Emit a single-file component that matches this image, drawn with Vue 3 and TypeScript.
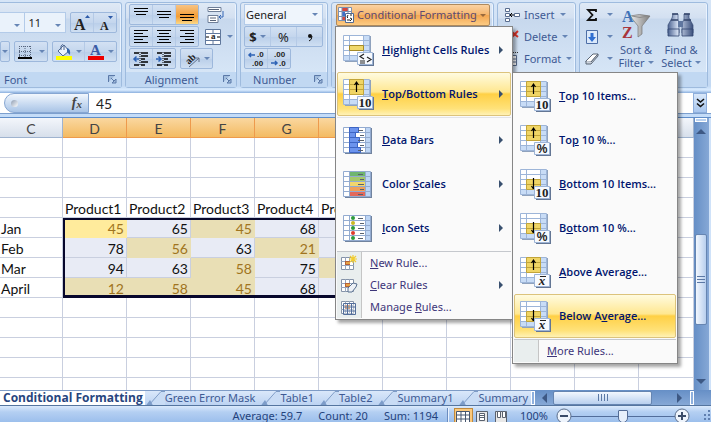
<script setup lang="ts">
import { ref } from 'vue'

interface MenuItem {
  pre: string
  key: string
  post: string
  icon: string
  badge?: string
  active?: boolean
  arrow?: boolean
}

interface Cell {
  text: string
  kind?: 'current' | 'marked' | 'plain'
}

const columns = [
  { name: 'C', on: false },
  { name: 'D', on: true },
  { name: 'E', on: true },
  { name: 'F', on: true },
  { name: 'G', on: true },
  { name: '', on: true },
  { name: '', on: false },
  { name: '', on: false },
  { name: '', on: false },
  { name: '', on: false },
  { name: '', on: false },
]

const months = [
  { name: 'Jan', values: ['45', '65', '45', '68', ''], marked: [0, 2] },
  { name: 'Feb', values: ['78', '56', '63', '21', ''], marked: [1, 3] },
  { name: 'Mar', values: ['94', '63', '58', '75', ''], marked: [2, 4] },
  { name: 'April', values: ['12', '58', '45', '68', ''], marked: [0, 1, 2] },
]

function blankRow(): Cell[] {
  return columns.map(() => ({ text: '' }))
}

function dataRow(index: number): Cell[] {
  const month = months[index]
  const cells = blankRow()
  cells[0].text = month.name
  month.values.forEach((value, i) => {
    const current = index === 0 && i === 0
    cells[i + 1] = { text: value, kind: current ? 'current' : month.marked.includes(i) ? 'marked' : 'plain' }
  })
  return cells
}

const titles = blankRow()
for (let i = 1; i <= 5; i++) titles[i].text = 'Product' + i

const rows: Cell[][] = [
  blankRow(), blankRow(), blankRow(), titles,
  dataRow(0), dataRow(1), dataRow(2), dataRow(3),
  blankRow(), blankRow(), blankRow(), blankRow(), blankRow(),
]

const ruleItems: MenuItem[] = [
  { pre: '', key: 'H', post: 'ighlight Cells Rules', icon: 'mid', badge: '≤>', arrow: true },
  { pre: '', key: 'T', post: 'op/Bottom Rules', icon: 'top', badge: '10', arrow: true, active: true },
]
const styleItems: MenuItem[] = [
  { pre: '', key: 'D', post: 'ata Bars', icon: 'bars', arrow: true },
  { pre: 'Color ', key: 'S', post: 'cales', icon: 'scales', arrow: true },
  { pre: '', key: 'I', post: 'con Sets', icon: 'sets', arrow: true },
]
const smallItems: MenuItem[] = [
  { pre: '', key: 'N', post: 'ew Rule...', icon: 'new' },
  { pre: '', key: 'C', post: 'lear Rules', icon: 'clear', arrow: true },
  { pre: 'Manage ', key: 'R', post: 'ules...', icon: 'manage' },
]
const topItems: MenuItem[] = [
  { pre: '', key: 'T', post: 'op 10 Items...', icon: 'top', badge: '10' },
  { pre: 'To', key: 'p', post: ' 10 %...', icon: 'top', badge: '%' },
  { pre: '', key: 'B', post: 'ottom 10 Items...', icon: 'bottom', badge: '10' },
  { pre: 'B', key: 'o', post: 'ttom 10 %...', icon: 'bottom', badge: '%' },
  { pre: '', key: 'A', post: 'bove Average...', icon: 'top', badge: 'x' },
  { pre: 'Below A', key: 'v', post: 'erage...', icon: 'bottom', badge: 'x', active: true },
]
const menus = [
  { id: 'rules', label: 'Conditional Formatting', groups: [ruleItems, styleItems], small: smallItems },
  {
    id: 'top',
    label: 'Top/Bottom Rules',
    groups: [topItems],
    small: [{ pre: '', key: 'M', post: 'ore Rules...', icon: 'none' } as MenuItem],
  },
]

const tabs = ['Green Error Mask', 'Table1', 'Table2', 'Summary1', 'Summary']
const barWidths = [9, 6, 10, 8, 11]
const scaleColors = ['#6fb56f', '#a5c86a', '#f2d66c', '#efa05a', '#e2695c']
const dotColors = ['#2c9a3c', '#c9b822', '#2c9a3c', '#e03a2c', '#2c9a3c']

const alignTop = [
  { label: 'Top Align', y: 3, on: false },
  { label: 'Middle Align', y: 6, on: false },
  { label: 'Bottom Align', y: 9, on: true },
]
const alignSide = [
  { label: 'Align Left', side: 'l' },
  { label: 'Center', side: 'c' },
  { label: 'Align Right', side: 'r' },
]
function lineX(side: string, i: number): number {
  if (i % 2 === 0) return 3
  return side === 'l' ? 3 : side === 'c' ? 5 : 8
}
function lineW(side: string, i: number): number {
  if (i % 2 === 0) return 14
  return side === 'c' ? 10 : 9
}

const fontName = ref('')
const fontSize = ref('11')
const formula = ref('45')
const zoom = ref(50)
</script>

<template>
  <div class="app">
    <header class="ribbon">
      <section class="group g-font">
        <div class="body rows-wide">
          <div class="row">
            <div class="combo name">
              <input v-model="fontName" aria-label="Font name" />
              <button aria-label="Font list"><i class="tri"></i></button>
            </div>
            <div class="combo size">
              <input v-model="fontSize" aria-label="Font size" />
              <button aria-label="Size list"><i class="tri"></i></button>
            </div>
            <div class="set push">
              <button class="tool" aria-label="Grow font">
                <svg width="18" height="18"><text x="1" y="16" class="serif" font-size="16">A</text><path d="M12 4l2.500-3 2.500 3z" fill="#2d5aa8" /></svg>
              </button>
              <button class="tool" aria-label="Shrink font">
                <svg width="18" height="18"><text x="4" y="16" class="serif" font-size="12">A</text><path d="M12 2l2.500 3 2.500-3z" fill="#2d5aa8" /></svg>
              </button>
            </div>
          </div>
          <div class="row">
            <div class="set"><button class="tool tiny" aria-label="Underline styles"><i class="tri"></i></button></div>
            <div class="set push">
              <button class="tool border-tool" aria-label="Borders">
                <svg width="16" height="16"><path d="M2 2.500h12M2 7.500h12M2 11.500h12M2.500 2v11M8 2v11M13.500 2v11" stroke="#56657e" stroke-dasharray="1 1" fill="none" /><path d="M1 14h14" stroke="#000" stroke-width="2" /></svg>
                <i class="tri"></i>
              </button>
            </div>
            <div class="set push">
              <button class="tool" aria-label="Fill color">
                <svg width="18" height="18"><path d="M3 8l6-6 5 6-6 5z" fill="#edf3fb" stroke="#4d6791" /><path d="M6 7V3q2-3 3 0v4" fill="none" stroke="#4d6791" /><path d="M12 5q4 1 3 7l-3-3z" fill="#3566aa" /><path d="M1 13h16v4H1z" fill="#ff0" /></svg>
                <i class="tri"></i>
              </button>
              <button class="tool" aria-label="Font color">
                <svg width="18" height="18"><text x="3" y="12" class="serif blue" font-size="15">A</text><path d="M1 13h16v4H1z" fill="#e00" /></svg>
                <i class="tri"></i>
              </button>
            </div>
          </div>
        </div>
        <footer>Font<button class="launch" aria-label="Font settings"><svg width="9" height="9"><path d="M.5 7V.5H7M3 3l3 3M8 4v4H4z" stroke="#5b79a8" fill="#5b79a8" fill-opacity=".3" /></svg></button></footer>
      </section>

      <section class="group g-align">
        <div class="body rows-tight">
          <div class="row">
            <div class="set">
              <button v-for="a in alignTop" :key="a.label" class="tool sq" :class="{ on: a.on }" :aria-label="a.label">
                <svg width="20" height="20"><path v-for="i in 3" :key="i" :d="`M${i === 3 ? 5 : 3} ${a.y + (i - 1) * 3 + 0.5}h${i === 3 ? 10 : 14}`" stroke="#000" /></svg>
              </button>
            </div>
            <button class="tool bare" aria-label="Wrap text">
              <svg width="18" height="18"><path d="M2 1.500h13v4H2zM2 9.500h10v7H2z" fill="#fff" stroke="#6f7f98" /><path d="M3 3.500h10M4 12h6M4 14.500h6" stroke="#59657a" /><path d="M17 5v6h-3M15 9l-2 2 2 2" fill="none" stroke="#3567b5" /></svg>
            </button>
          </div>
          <div class="row">
            <div class="set">
              <button v-for="a in alignSide" :key="a.label" class="tool sq" :aria-label="a.label">
                <svg width="20" height="20"><path v-for="i in 5" :key="i" :d="`M${lineX(a.side, i - 1)} ${i * 3 + 0.5}h${lineW(a.side, i - 1)}`" stroke="#000" /></svg>
              </button>
            </div>
            <button class="tool bare" aria-label="Merge and center">
              <svg width="18" height="18"><path d="M1.500 1.500h15v15h-15zM1.500 5.500h15M1.500 12.500h15M9 1.500v4M9 12.500v4" fill="#fff" stroke="#60789c" /><text x="7" y="11" class="serif" font-size="9">a</text><path d="M2 9h3M13 9h3" stroke="#000" /></svg>
              <i class="tri"></i>
            </button>
          </div>
          <div class="row">
            <div class="set">
              <button class="tool sq" aria-label="Decrease indent">
                <svg width="20" height="20"><path d="M3 4h5M10 4h7M10 7h7M10 10h4M10 13h7M3 16h5M10 16h4" stroke="#000" stroke-width="1.300" /><path d="M9 3v14" stroke="#000" stroke-dasharray="1 1" /><path d="M8 10H3M5.500 7.500L3 10l2.500 2.500" stroke="#2d62b5" stroke-width="1.500" fill="none" /></svg>
              </button>
              <button class="tool sq" aria-label="Increase indent">
                <svg width="20" height="20"><path d="M3 4h5M10 4h7M10 7h7M10 10h4M10 13h7M3 16h5M10 16h4" stroke="#000" stroke-width="1.300" /><path d="M9 3v14" stroke="#000" stroke-dasharray="1 1" /><path d="M2 10h5M4.500 7.500L7 10l-2.500 2.500" stroke="#2d62b5" stroke-width="1.500" fill="none" /></svg>
              </button>
            </div>
            <div class="set push">
              <button class="tool" aria-label="Orientation">
                <svg width="18" height="18"><text x="3" y="12" class="serif" font-size="10" transform="rotate(-45 8 10)">ab</text><path d="M6 17L16 8M16 12V8h-4" stroke="#60708a" fill="none" /></svg>
                <i class="tri"></i>
              </button>
            </div>
          </div>
        </div>
        <footer class="mid">Alignment<button class="launch" aria-label="Alignment settings"><svg width="9" height="9"><path d="M.5 7V.5H7M3 3l3 3M8 4v4H4z" stroke="#5b79a8" fill="#5b79a8" fill-opacity=".3" /></svg></button></footer>
      </section>

      <section class="group g-number">
        <div class="body rows-tight">
          <div class="select-box">
            <select aria-label="Number format"><option>General</option></select>
            <i class="tri"></i>
          </div>
          <div class="row">
            <div class="set fill">
              <button class="tool money" aria-label="Currency"><b>$</b><i class="tri"></i></button>
              <button class="tool money" aria-label="Percent">%</button>
              <button class="tool money" aria-label="Comma"><svg width="8" height="12"><circle cx="4" cy="5" r="2" fill="#111" /><path d="M6 5q0 4-3 5" stroke="#111" fill="none" /></svg></button>
            </div>
          </div>
          <div class="row">
            <div class="set">
              <button class="tool sq" aria-label="Increase decimal">
                <svg width="20" height="20"><text x="11" y="8" class="dec">.0</text><text x="6" y="17" class="dec">.00</text><path d="M3 6h6M5 4L3 6l2 2" stroke="#2d62b5" fill="none" stroke-width="1.500" /></svg>
              </button>
              <button class="tool sq" aria-label="Decrease decimal">
                <svg width="20" height="20"><text x="5" y="8" class="dec">.00</text><text x="10" y="17" class="dec">.0</text><path d="M2 14h6M6 12l2 2-2 2" stroke="#2d62b5" fill="none" stroke-width="1.500" /></svg>
              </button>
            </div>
          </div>
        </div>
        <footer class="mid">Number<button class="launch" aria-label="Number settings"><svg width="9" height="9"><path d="M.5 7V.5H7M3 3l3 3M8 4v4H4z" stroke="#5b79a8" fill="#5b79a8" fill-opacity=".3" /></svg></button></footer>
      </section>

      <section class="group g-styles">
        <div class="body">
          <button class="cf" aria-haspopup="true" aria-expanded="true">
            <svg width="16" height="16"><path d="M.5.5h13v13H.5z" fill="#fff" stroke="#7b8fb0" /><path d="M4 1h6v3H4z" fill="#d8453c" /><path d="M4 5h3v4H4z" fill="#3e6fc9" /><path d="M4 10h4v3H4z" fill="#d8453c" /><path d="M.5 4.500h13M.5 9.500h13M4 1v13M10 1v13" stroke="#7b8fb0" /><path d="M7.500 6.500h8v9h-8z" fill="#fff" stroke="#516a94" /><path d="M10 8l-1 2 1 1M12 8h2M9 13h3M12 11l2 1-2 2" stroke="#222" fill="none" /></svg>
            <span>Conditional Formatting</span>
            <i class="tri warm"></i>
          </button>
        </div>
        <footer></footer>
      </section>

      <section class="group g-cells">
        <div class="body rows-tight">
          <button class="line">
            <svg width="16" height="16"><path d="M1.500 1.500h4v3h-4zM1.500 6.500h4v3h-4zM1.500 11.500h4v3h-4zM10.500 6.500h5v3h-5z" fill="#fff" stroke="#596d8e" /><path d="M10 8H6M8 6L6 8l2 2" stroke="#000" fill="none" /></svg>
            <span>Insert</span><i class="tri"></i>
          </button>
          <button class="line">
            <svg width="16" height="16"><path d="M1.500 1.500h4v3h-4zM1.500 6.500h4v3h-4zM1.500 11.500h4v3h-4z" fill="#fff" stroke="#596d8e" /><path d="M8 3l6 5M14 2L8 8" stroke="#e0352b" stroke-width="2" /></svg>
            <span>Delete</span><i class="tri"></i>
          </button>
          <button class="line">
            <svg width="16" height="16"><path d="M3.500 4.500h9v10h-9zM3.500 8h9M3.500 11h9M8 4v10" fill="#fff" stroke="#596d8e" /><path d="M3 1.500h11" stroke="#333" stroke-dasharray="1 1" /></svg>
            <span>Format</span><i class="tri"></i>
          </button>
        </div>
        <footer></footer>
      </section>

      <section class="group g-edit">
        <div class="body edit">
          <div class="rows-tight">
            <button class="line icon" aria-label="AutoSum"><svg width="16" height="16"><path d="M12 5V3H4l4.500 5L4 13h8v-2" stroke="#111" stroke-width="1.800" fill="none" /></svg><i class="tri"></i></button>
            <button class="line icon" aria-label="Fill"><svg width="16" height="16"><path d="M2.500 1.500h11v13h-11z" fill="#dbe9fb" stroke="#4d6ea6" /><path d="M6.500 4h3v4H12l-4 5-4-5h2.500z" fill="#2f6fd2" /></svg><i class="tri"></i></button>
            <button class="line icon" aria-label="Clear"><svg width="16" height="16"><path d="M2 10l7-7h5l-7 8H2z" fill="#fff" stroke="#5b6675" /><path d="M2 10v3h5l7-8V3l-7 8" fill="#cdd4de" stroke="#5b6675" /></svg><i class="tri"></i></button>
          </div>
          <button class="big">
            <svg width="32" height="32">
              <defs><linearGradient id="funnel"><stop offset="0" stop-color="#eee" /><stop offset="1" stop-color="#7d7d7d" /></linearGradient></defs>
              <path d="M10 8q9-3 20 0l-8 10v8l-4 3V18z" fill="url(#funnel)" stroke="#777" stroke-width=".7" /><path d="M12 8q8 3 16 0" stroke="#8c8c8c" fill="none" />
              <text x="2" y="14" class="serif azure" font-size="16">A</text>
              <text x="2" y="30" class="serif red" font-size="16">Z</text>
            </svg>
            <span>Sort &amp;</span><span>Filter<i class="tri"></i></span>
          </button>
          <button class="big">
            <svg width="32" height="32">
              <defs><linearGradient id="glass"><stop offset="0" stop-color="#4c6391" /><stop offset=".4" stop-color="#d5e0f3" /><stop offset="1" stop-color="#3a4f7c" /></linearGradient></defs>
              <path d="M8 6h5v5l1 5v9H3v-8l4-7zM19 6h5v4l4 7v8H17v-9l2-5z" fill="url(#glass)" stroke="#3b4f78" stroke-width=".7" />
              <path d="M3 21h11v7H3zM17 21h11v7H17z" fill="url(#glass)" stroke="#31456f" stroke-width=".8" />
              <path d="M13 13h5v6h-5z" fill="#5f769f" /><path d="M7 6h6M19 6h6M6 12h7M19 12h7" stroke="#34466b" stroke-width="1.500" />
            </svg>
            <span>Find &amp;</span><span>Select<i class="tri"></i></span>
          </button>
        </div>
        <footer></footer>
      </section>
    </header>

    <div class="formula">
      <div class="pill"><span class="knob"></span><button aria-label="Insert function"><span class="f">f</span><span class="x">x</span></button></div>
      <input v-model="formula" aria-label="Formula" />
      <button class="expand" aria-label="Expand formula bar"><svg width="11" height="12"><path d="M2 2l3.500 3L9 2M2 6.500l3.500 3L9 6.500" stroke="#111" stroke-width="1.600" fill="none" /></svg></button>
    </div>

    <main class="sheet">
      <div class="grid">
        <table>
          <thead>
            <tr><th v-for="(c, i) in columns" :key="i" :class="{ on: c.on }">{{ c.name }}</th></tr>
          </thead>
          <tbody>
            <tr v-for="(r, ri) in rows" :key="ri" :class="{ first: ri === 4, last: ri === 7 }">
              <td v-for="(cell, ci) in r" :key="ci" :class="[cell.kind, { sel: cell.kind, start: cell.kind && ci === 1 }]">{{ cell.text }}</td>
            </tr>
          </tbody>
        </table>
      </div>
      <div class="vscroll">
        <span class="split"></span>
        <button aria-label="Scroll up"><i class="tri up"></i></button>
        <div class="track"><div class="thumb"><i></i><i></i><i></i></div></div>
        <button aria-label="Scroll down"><i class="tri dark"></i></button>
      </div>
    </main>

    <nav class="tabs">
      <div class="names">
        <a href="#current" class="current">Conditional Formatting</a>
        <template v-for="t in tabs" :key="t">
          <svg width="20" height="15"><path d="M0 14.500h5L17 .5h3V15H0z" fill="#c9dcf5" /><path d="M1 14.500L5 9l3 5.500z" fill="#7c9cc9" /><path d="M4 14L16 .5h4" stroke="#7f9cc6" fill="none" /></svg>
          <a href="#sheet">{{ t }}</a>
        </template>
      </div>
      <div class="hscroll">
        <span class="split"></span>
        <button aria-label="Scroll left"><i class="tri left"></i></button>
        <div class="thumb"><i></i><i></i><i></i><i></i></div>
        <button class="far" aria-label="Scroll right"><i class="tri right"></i></button>
        <span class="split"></span>
      </div>
    </nav>

    <footer class="status">
      <span>Average: 59.7</span><span>Count: 20</span><span>Sum: 1194</span>
      <div class="views">
        <button class="on" aria-label="Normal"><svg width="14" height="14"><path d="M.5 1.500h13v11H.5zM.5 5h13M.5 9h13M5 1v12M9.500 1v12" fill="#fff" stroke="#46566f" /></svg></button>
        <button aria-label="Page layout"><svg width="14" height="14"><path d="M1.500 1.500h11v11h-11z" fill="#e8e8e8" stroke="#59616e" /><path d="M4.500 3.500h5v7h-5zM5 5.500h4M5 7.500h4" fill="#fff" stroke="#59616e" /></svg></button>
        <button aria-label="Page breaks"><svg width="14" height="14"><path d="M1.500 1.500h11v11h-11z" fill="#e8e8e8" stroke="#59616e" /><path d="M3.500 1.500h3v6h-3zM8.500 1.500h3v6h-3z" fill="#fff" stroke="#59616e" /></svg></button>
      </div>
      <button class="percent">100%</button>
      <button class="round" aria-label="Zoom out"><svg width="16" height="16"><circle cx="8" cy="8" r="7" fill="#eef4fc" stroke="#5c6f8d" /><path d="M4 8h8" stroke="#3b4c69" stroke-width="2" /></svg></button>
      <input v-model="zoom" type="range" min="0" max="100" aria-label="Zoom" />
      <button class="round" aria-label="Zoom in"><svg width="16" height="16"><circle cx="8" cy="8" r="7" fill="#eef4fc" stroke="#5c6f8d" /><path d="M4 8h8M8 4v8" stroke="#3b4c69" stroke-width="2" /></svg></button>
      <svg class="grip" width="9" height="12"><path d="M6 1h2v2H6zM6 5h2v2H6zM2 5h2v2H2zM6 9h2v2H6zM2 9h2v2H2z" fill="#5f7fb0" /></svg>
    </footer>

    <div v-for="m in menus" :key="m.id" class="menu" :class="m.id" role="menu" :aria-label="m.label">
      <div v-for="(g, gi) in m.groups" :key="gi" class="block">
        <button v-for="it in g" :key="it.post" class="item" :class="{ active: it.active }" role="menuitem">
          <svg width="32" height="32">
            <template v-if="it.badge">
              <path d="M2 2h26v26H2z" fill="#8fa2bd" />
              <path d="M.5 1.500h26v25H.5z" fill="#fff" />
              <path d="M20 2h6v24h-6zM1 22h25v4H1z" fill="#c8dcf6" />
              <path v-if="it.icon === 'mid'" d="M7 11h13v6H7z" fill="#f0d86c" />
              <path v-if="it.icon === 'top'" d="M7 1h13v16H7z" fill="#f0d565" />
              <path v-if="it.icon === 'bottom'" d="M7 12h13v10H7z" fill="#f0d565" />
              <path d="M.5 1.500h26v25H.5zM.5 6.500h26M.5 11.500h26M.5 16.500h26M.5 21.500h26M6.500 1v25M20.500 1v25" fill="none" stroke="#9db5d8" />
              <path v-if="it.icon === 'mid'" d="M6.500 11.500h14v5h-14z" fill="none" stroke="#a58b28" />
              <path v-if="it.icon === 'top'" d="M6.500 1.500h14v15h-14zM6.500 6.500h14M6.500 11.500h14" fill="none" stroke="#c2a53a" />
              <path v-if="it.icon === 'bottom'" d="M6.500 11.500h14v10h-14zM6.500 16.500h14" fill="none" stroke="#c2a53a" />
              <path v-if="it.icon === 'top'" d="M13.500 14V4M11.500 7l2-3 2 3" fill="none" stroke="#000" stroke-width="1.200" />
              <path v-if="it.icon === 'bottom'" d="M13.500 10v11M11.500 18l2 3" fill="none" stroke="#000" stroke-width="1.200" />
              <path d="M16 19h15v13H16z" fill="#637694" />
              <path d="M14.500 18.500h15v12h-15z" fill="#f7fafe" stroke="#9db4d6" />
              <path v-if="it.badge === '≤>'" d="M21 20l-4 2.500 4 2.500M17 27h5M17 29h5M24 23l4 2.500-4 2.500" fill="none" stroke="#222" stroke-width="1.200" />
              <text v-if="it.badge === '10'" x="22" y="29" text-anchor="middle" class="serif" font-size="13">10</text>
              <text v-if="it.badge === '%'" x="22" y="29" text-anchor="middle" class="pct">%</text>
              <text v-if="it.badge === 'x'" x="22" y="29" text-anchor="middle" class="mean">x</text>
              <path v-if="it.badge === 'x'" d="M20 20.500h6" stroke="#222" />
            </template>
            <template v-else>
              <path d="M2 4h27v26H2z" fill="#71839e" />
              <path d="M.5 3.500h27v25H.5z" fill="#fff" />
              <path d="M22 4h6v24h-6z" fill="#bdd5f5" />
              <template v-if="it.icon === 'scales'"><path v-for="(c, i) in scaleColors" :key="i" :d="`M6 ${4 + i * 5}h16v5H6z`" :fill="c" /></template>
              <path d="M.5 3.500h27v25H.5zM.5 8.500h27M.5 13.500h27M.5 18.500h27M.5 23.500h27M6.500 3v25M22.500 3v25" fill="none" stroke="#93abd0" />
              <template v-if="it.icon === 'bars'"><path v-for="(w, i) in barWidths" :key="i" :d="`M6.500 ${3.5 + i * 5}h${w}v5h-${w}z`" fill="#6c94ee" stroke="#3d65c4" /></template>
              <template v-if="it.icon === 'sets'"><circle v-for="(c, i) in dotColors" :key="i" cx="10" :cy="6 + i * 5" r="2" :fill="c" /></template>
              <path d="M15 6.500h5M17 11.500h4M15 16.500h6M17 21.500h4M15 26.500h5" stroke="#59616b" />
            </template>
          </svg>
          <span class="label">{{ it.pre }}<u>{{ it.key }}</u>{{ it.post }}</span>
          <i v-if="it.arrow" class="tri go"></i>
        </button>
      </div>
      <div class="block small">
        <button v-for="it in m.small" :key="it.post" class="item" role="menuitem">
          <svg width="18" height="16">
            <template v-if="it.icon !== 'none'">
              <path d="M1.500 2.500h12v12h-12z" fill="#fff" stroke="#8593a8" />
              <path d="M1 6.500h13M1 10.500h13M5.500 2v13M9.500 2v13" stroke="#96a5bb" />
              <path d="M5 6h5v4H5z" fill="#b5623a" /><path d="M6 7h4v2H6z" fill="#e7a344" />
              <path v-if="it.icon === 'new'" d="M13 0v8M9 4h8M10 1l6 6M16 1l-6 6" stroke="#f2cd30" stroke-width="1.200" />
              <path v-if="it.icon === 'clear'" d="M8 11l5-5 4 1-1 3-4 5H8z" fill="#edf1f6" stroke="#59708f" />
              <path v-if="it.icon === 'manage'" d="M3.500 4.500h12v11h-12zM7.500 4v11M11.500 4v11M3 8h13M3 12h13" fill="#fff" fill-opacity=".4" stroke="#536e9b" />
            </template>
          </svg>
          <span class="label">{{ it.pre }}<u>{{ it.key }}</u>{{ it.post }}</span>
          <i v-if="it.arrow" class="tri go"></i>
        </button>
      </div>
    </div>
  </div>
</template>

<style>
body {
  margin: 0;
  background: #bfdbff;
}
</style>

<style scoped>
.app {
  --ink: #3e5a94;
  --edge: #9ebbde;
  --line: #c9cfdf;
  --mark: #07072c;
  position: relative;
  display: flex;
  flex-direction: column;
  height: 100vh;
  overflow: hidden;
  background: #c4dcf8;
  color: var(--ink);
  font-family: "Noto Sans", "Open Sans", sans-serif;
  font-size: 11px;
  line-height: 14px;
}
.app * { box-sizing: border-box; }
button, input, select {
  font: inherit;
  color: inherit;
  border: 0;
  padding: 0;
  margin: 0;
  background: none;
  border-radius: 0;
}
svg { display: block; flex: none; }
a { color: inherit; text-decoration: none; }

.tri {
  display: inline-block;
  flex: none;
  width: 0;
  height: 0;
  border: 3px solid transparent;
  border-top-color: #6685b5;
  border-bottom-width: 0;
}
.tri.warm { border-top-color: #9a6a3c; }
.tri.dark { border-width: 5px 5px 0; border-top-color: #3d5884; }
.tri.up { border-width: 0 5px 5px; border-color: transparent transparent #3d5884; }
.tri.left { border-width: 5px 5px 5px 0; border-color: transparent #3d5884 transparent transparent; }
.tri.right { border-width: 5px 0 5px 5px; border-color: transparent transparent transparent #3d5884; }
.tri.go { border-width: 4px 0 4px 4px; border-color: transparent transparent transparent #39506f; }

.ribbon {
  display: flex;
  flex: none;
  gap: 3px;
  height: 93px;
  padding: 2px 3px 5px 0;
  background: linear-gradient(#d6e5f7, #c3d9f3 86px, #d9ebff 90px, #8cb0de);
}
.group {
  display: flex;
  flex-direction: column;
  flex: none;
  border: 1px solid var(--edge);
  border-radius: 3px;
  background: linear-gradient(#dfe9f5, #d3e0f1 15px, #c7d8ed 16px, #dae9f9);
  box-shadow: inset -1px 0 #e9f3ff;
}
.group footer {
  display: flex;
  align-items: center;
  height: 15px;
  padding: 0 4px;
  background: #c1d8f2;
}
.group footer.mid::before { content: ""; margin-right: auto; }
.launch { margin-left: auto; padding-left: 10px; }
.body { flex: 1; padding: 1px 4px 0; }
.rows-tight { display: flex; flex-direction: column; gap: 1px; }
.rows-wide { display: flex; flex-direction: column; gap: 8px; padding-top: 9px; }
.row { display: flex; align-items: center; }
.g-font { width: 122px; border-left: 0; border-radius: 0 3px 3px 0; }
.g-font .body { padding-left: 0; }
.g-align { width: 112px; }
.g-number { width: 88px; }
.g-styles { flex: 1 1 0; min-width: 0; }
.g-cells { width: 79px; }
.g-edit { width: 129px; }
.g-align .body, .g-number .body { padding-left: 3px; }

.set {
  display: flex;
  height: 21px;
  border: 1px solid #9db8dc;
  border-radius: 2px;
  background: linear-gradient(#d3e1f3, #c4d6ed 50%, #b9cee9 51%, #cfdff2);
}
.set.push { margin-left: 4px; }
.set.fill { width: 100%; }
.tool {
  display: flex;
  align-items: center;
  justify-content: center;
  gap: 3px;
  min-width: 21px;
  padding: 0 2px;
}
.tool + .tool { border-left: 1px solid #b5cae6; }
.tool.sq { width: 22px; padding: 0; }
.tool.sq + .tool.sq { width: 23px; }
.tool.tiny { min-width: 8px; padding: 0 1px; }
.tool.border-tool { gap: 6px; }
.tool.on { background: linear-gradient(#f7c384, #f49d34 60%, #fbd98a); }
.tool.bare { margin-left: 5px; padding: 0; gap: 5px; }
.tool.money { flex: 1; font-size: 13px; color: #222; }
.serif { font-family: "Liberation Serif", serif; font-weight: bold; fill: #222; }
.serif.blue { fill: #3a5ba5; }
.serif.azure { fill: #3f73b8; }
.serif.red { fill: #a8353d; }
.dec { font: bold 8px/8px "Liberation Sans", sans-serif; fill: #222; }
.pct { font: bold 12px "Liberation Sans", sans-serif; fill: #222; }
.mean { font: italic bold 13px "Liberation Serif", serif; fill: #222; }

.combo {
  display: flex;
  height: 21px;
  border: 1px solid #b3cbe9;
  border-left: 0;
  background: #eaf2fb;
  color: #222;
}
.combo input { width: 100%; min-width: 0; padding-left: 3px; }
.combo.name { width: 27px; }
.combo.size { width: 43px; }
.combo button { flex: none; width: 14px; }
.select-box { display: flex; align-items: center; height: 21px; padding-right: 4px; border: 1px solid #b3cbe9; background: #eff5fc; color: #222; }
.select-box select { flex: 1; min-width: 0; height: 19px; padding-left: 1px; appearance: none; outline: 0; }

.g-styles .body { padding: 1px 3px 0 4px; }
.cf {
  display: flex;
  align-items: center;
  gap: 3px;
  width: 100%;
  height: 22px;
  padding: 0 3px 0 1px;
  border: 1px solid #b08a5c;
  border-radius: 2px;
  background: linear-gradient(#fbd2a2, #f5b56c 50%, #f4a650 51%, #fccb83);
  color: #5e4a70;
  white-space: nowrap;
}
.cf .tri { margin-left: auto; }
.line { display: flex; align-items: center; gap: 4px; height: 21px; }
.line .tri { margin-left: 1px; }
.line.icon { gap: 6px; }
.g-cells .body { padding-left: 6px; }
.edit { display: flex; gap: 1px; }
.big { display: flex; flex-direction: column; align-items: center; flex: 1; padding-top: 4px; line-height: 13px; white-space: nowrap; }
.big span { display: flex; align-items: center; gap: 3px; }
.big svg { margin-bottom: 3px; }

.formula { display: flex; flex: none; height: 21px; padding-right: 4px; border-bottom: 1px solid #7c9fce; background: #fff; }
.pill {
  display: flex;
  align-items: center;
  justify-content: space-between;
  width: 85px;
  margin-left: 4px;
  padding: 0 6px;
  border: 1px solid #86a6d2;
  border-radius: 10px 0 0 10px;
  background: linear-gradient(#f2f7fd, #c5d8f0 60%, #a9c4e6);
}
.knob { width: 7px; height: 7px; border-radius: 50%; background: linear-gradient(135deg, #8e9db3, #fff); }
.pill button { display: flex; color: #444; font: italic bold 14px "Liberation Serif", serif; }
.pill .x { font-size: 11px; padding-top: 3px; }
.formula input { flex: 1; min-width: 0; padding-left: 7px; color: #222; font: 14px Lato, sans-serif; }
.expand { display: flex; align-items: center; justify-content: center; width: 14px; border: 1px solid #8eaedb; background: linear-gradient(#d9e8fa, #a8c6ee); }

.sheet { display: flex; flex: 1; min-height: 0; margin-top: 3px; border-top: 1px solid #5f8dc9; background: #fff; }
.grid { flex: 1; min-width: 0; overflow: hidden; }
table { width: 100%; table-layout: fixed; border-collapse: separate; border-spacing: 0; color: #111; font: 14px/19px Lato, sans-serif; }
th, td { width: 64px; height: 20px; padding: 0 3px 0 2px; white-space: nowrap; overflow: hidden; text-align: left; box-shadow: inset -1px -1px var(--line); }
th:first-child { width: 63px; }
td:first-child { padding: 0 1px; }
th:last-child { width: auto; }
th { --line: #9fb3cf; background: linear-gradient(#f3f6fb, #d5deea); color: #444; font-weight: normal; text-align: center; }
th.on { --line: #ee9a4c; background: linear-gradient(#fad7a0, #f3b95f); }
td.sel { text-align: right; }
td.plain { background: #e8ebf5; }
td.marked { --line: #e9dfb5; background: #e9dfb5; color: #a07420; }
td.current { --line: #ffeb9c; background: #ffeb9c; color: #a07420; }
td.start { box-shadow: inset 2px 0 var(--mark), inset -1px -1px var(--line); }
.first td.sel { box-shadow: inset 0 2px var(--mark), inset -1px -1px var(--line); }
.first td.start { box-shadow: inset 2px 2px var(--mark), inset -1px -1px var(--line); }
.last td.sel { box-shadow: inset 0 -3px var(--mark), inset -1px -1px var(--line); }
.last td.start { box-shadow: inset 2px -3px var(--mark); }

.vscroll { display: flex; flex-direction: column; align-items: stretch; width: 17px; padding: 0 2px 0 1px; border-right: 2px solid #cfe2f9; background: linear-gradient(90deg, #668fc6, #86a8d6); }
.vscroll button { display: flex; align-items: center; justify-content: center; height: 18px; }
.vscroll .split { height: 4px; border: 1px solid #fff; background: #b9d1f0; }
.track { display: flex; flex-direction: column; flex: 1; padding-top: 94px; }
.thumb { display: flex; align-items: center; justify-content: center; gap: 2px; border: 1px solid #6685b1; border-radius: 2px; background: linear-gradient(90deg, #f2f7fe, #b8cfee); }
.track .thumb { flex-direction: column; height: 91px; }
.track .thumb i { width: 8px; height: 1px; background: #5b78a5; }

.tabs { display: flex; flex: none; height: 16px; border-bottom: 1px solid #55759f; background: #c9dcf5; }
.names { display: flex; flex: 1 1 0; min-width: 0; overflow: hidden; border-top: 1px solid #7f9cc6; white-space: nowrap; background: linear-gradient(#dae8fa, #bcd3f2); }
.names a { padding-right: 5px; }
.names a.current { padding: 0 2px 0 3px; background: #fff; font-weight: 700; font-size: 12px; color: #27457e; font-family: "Open Sans", sans-serif; }
.hscroll { display: flex; align-items: center; flex: 0 0 180px; background: linear-gradient(#668fc6, #86a8d6); }
.hscroll .split { width: 4px; height: 14px; border: 1px solid #fff; background: #8eb0de; }
.hscroll button { display: flex; justify-content: center; width: 18px; }
.hscroll .far { margin-left: auto; }
.hscroll .split:last-child { margin: 0 17px 0 2px; }
.hscroll .thumb { width: 99px; height: 14px; background: linear-gradient(#f2f7fe, #b8cfee); }
.hscroll .thumb i { width: 1px; height: 7px; background: #5b78a5; }

.status { display: flex; align-items: flex-start; flex: none; height: 16px; padding-top: 3px; overflow: hidden; background: linear-gradient(#dbeafc, #b4cff2 6px, #9cbfec); color: #23427c; white-space: nowrap; }
.status > span { margin-right: 16px; }
.status > span:first-child { margin-left: auto; }
.views { display: flex; margin: -1px 8px 0 -7px; padding-left: 6px; border-left: 1px solid #6b8cbf; box-shadow: inset 1px 0 #eaf3ff; }
.views button { width: 19px; height: 18px; padding: 2px; }
.views .on { border: 1px solid #c08a3e; padding: 1px; background: #fbc97c; }
.percent { width: 30px; }
.round { margin: -1px 0 0 7px; }
.status input { appearance: none; width: 104px; height: 14px; margin: 0 0 0 -1px; background: linear-gradient(#526d9a, #526d9a) center / 100% 1px no-repeat; }
.status input::-webkit-slider-thumb { appearance: none; width: 10px; height: 13px; border: 1px solid #536c96; border-radius: 1px 1px 5px 5px; background: #e6effb; }
.status input + .round { margin-left: -1px; }
.grip { margin: 0 0 0 12px; }

.menu { position: absolute; padding: 1px; border: 1px solid #868686; background: #fafafa; color: #00156e; box-shadow: 3px 3px 3px rgba(0, 0, 0, .35); }
.menu.rules { left: 335px; top: 26px; width: 178px; }
.menu.top { left: 512px; top: 72px; width: 166px; }
.item { display: flex; align-items: center; gap: 7px; width: 100%; height: 44px; padding: 0 7px 0 5px; border: 1px solid transparent; border-radius: 2px; font-family: "Open Sans", sans-serif; font-weight: 600; white-space: nowrap; }
.item.active { border-color: #dcc37c; background: linear-gradient(#fffbe0, #ffe790 45%, #ffd045 50%, #ffe27a 85%, #fff2b5); }
.item .go { margin-left: auto; }
.block + .block { margin-top: 1px; border-top: 1px solid #e2e4e8; }
.block.small { border-top-color: #c5c8cd; background: linear-gradient(90deg, #e9eeee 24px, #c5c5c5 24px, #c5c5c5 25px, transparent 25px); }
.small .item { height: 22px; padding-left: 2px; gap: 12px; font-family: "Noto Sans", sans-serif; font-weight: 400; color: #3d3579; }
</style>
